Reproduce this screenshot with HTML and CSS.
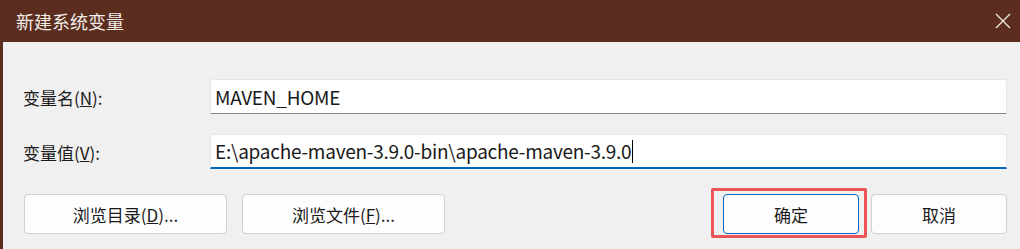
FILE: index.html
```html
<!DOCTYPE html>
<html lang="zh-CN">
<head>
    <meta charset="UTF-8">
    <title>新建系统变量</title>
    <link rel="stylesheet" href="styles.css">
</head>
<body>
    <div class="dialog">
        <div class="title-bar">
            <span class="title">新建系统变量</span>
            <svg class="close" width="16" height="16" viewBox="0 0 16 16">
                <path d="M1 1 L15 15 M15 1 L1 15" stroke="#f2ebe7" stroke-width="1.3" fill="none"/>
            </svg>
        </div>
        <div class="fields">
            <label class="label">变量名(<u>N</u>):</label>
            <div class="field">MAVEN_HOME</div>
            <label class="label">变量值(<u>V</u>):</label>
            <div class="field focused">E:\apache-maven-3.9.0-bin\apache-maven-3.9.0<span class="caret"></span></div>
        </div>
        <div class="buttons">
            <div class="group">
                <button class="button wide">浏览目录(<u>D</u>)...</button>
                <button class="button wide">浏览文件(<u>F</u>)...</button>
            </div>
            <div class="group right">
                <div class="marked">
                    <button class="button primary">确定</button>
                    <span class="mark"></span>
                </div>
                <button class="button">取消</button>
            </div>
        </div>
    </div>
</body>
</html>
```

FILE: styles.css
```css
:root {
    --title-bg: #5a2d1e;
    --body-bg: #f0f0f0;
    --text: #1a1a1a;
    --accent: #0067c0;
    --ui-font: "Noto Sans CJK SC", "Noto Sans", sans-serif;
}

body {
    margin: 0;
    background-color: var(--body-bg);
    font-family: var(--ui-font);
    color: var(--text);
    border-left: 3px solid var(--title-bg);
    height: 249px;
    box-sizing: border-box;
    overflow: hidden;
}
.title-bar {
    height: 42px;
    background-color: var(--title-bg);
    display: flex;
    align-items: center;
    justify-content: space-between;
    padding: 0 9px 0 16px;
    margin-left: -3px;
}
.title {
    color: #f4eeeb;
    font-size: 18px;
    line-height: 1;
    margin-top: -1px;
}
.close {
    display: block;
    margin-top: -1px;
}
.fields {
    display: grid;
    grid-template-columns: 187px 1fr;
    row-gap: 20px;
    align-items: center;
    padding: 37px 13px 0 20px;
}
.label {
    font-size: 17px;
    line-height: 1;
    margin-top: 2px;
}
.field {
    height: 35px;
    box-sizing: border-box;
    background-color: #fff;
    border: 1px solid #e6e6e6;
    border-bottom: 1px solid #878787;
    border-radius: 3px 3px 0 0;
    padding: 0 4px;
    font-size: 19px;
    letter-spacing: -0.25px;
    line-height: 32px;
    display: flex;
    align-items: center;
    white-space: nowrap;
}
.field.focused {
    border-bottom: 2px solid var(--accent);
}
.caret {
    display: inline-block;
    width: 1px;
    height: 23px;
    background-color: #000;
    margin-left: 1px;
}
.buttons {
    display: flex;
    justify-content: space-between;
    padding: 25px 13px 0 21px;
}
.group {
    display: flex;
    gap: 15px;
}
.group.right {
    gap: 12px;
}
.button {
    height: 40px;
    width: 136px;
    box-sizing: border-box;
    background-color: #fdfdfd;
    border: 1px solid #d0d0d0;
    border-radius: 4px;
    font-family: var(--ui-font);
    font-size: 17px;
    color: var(--text);
    padding: 0;
}
.button.wide {
    width: 203px;
}
.button.primary {
    border-color: var(--accent);
}
.marked {
    position: relative;
}
.mark {
    position: absolute;
    left: -12px;
    right: -8px;
    top: -6px;
    bottom: -4px;
    border: 3px solid #eb5458;
    border-radius: 2px;
}
```
